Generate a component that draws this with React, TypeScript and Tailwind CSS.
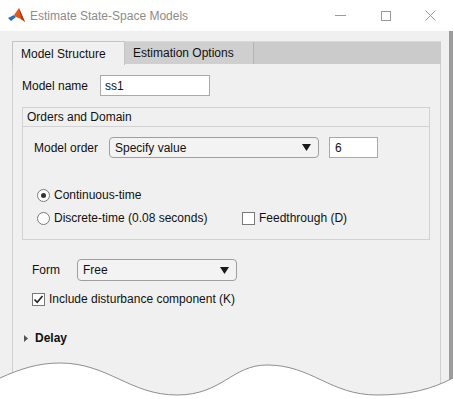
import React from "react";

const font = { fontFamily: '"Liberation Sans", Arial, sans-serif' };

function Caret() {
  return (
    <svg width="9" height="7" viewBox="0 0 9 7" className="block">
      <path d="M0 0 L9 0 L4.5 7 Z" fill="#1a1a1a" />
    </svg>
  );
}

function Radio({ checked }: { checked?: boolean }) {
  return (
    <span className="w-[13px] h-[13px] rounded-full border border-[#7a7a7a] bg-white flex items-center justify-center shrink-0">
      {checked && <span className="w-[5px] h-[5px] rounded-full bg-[#333]" />}
    </span>
  );
}

function Check({ checked }: { checked?: boolean }) {
  return (
    <span className="w-[13px] h-[13px] border border-[#7a7a7a] bg-white flex items-center justify-center shrink-0">
      {checked && (
        <svg width="11" height="11" viewBox="0 0 11 11">
          <path d="M1.5 5.5 L4.2 8.3 L9.5 2" fill="none" stroke="#222" strokeWidth="1.6" />
        </svg>
      )}
    </span>
  );
}

export default function App() {
  return (
    <div
      className="relative w-[453px] h-[399px] overflow-hidden bg-white text-[12px] text-[#111]"
      style={font}
    >
      {/* Title bar */}
      <div className="h-[31px] flex items-center bg-white">
        <svg width="18" height="18" viewBox="0 0 18 18" className="ml-[8px]">
          <path d="M0 11 L6 8 L8 10 L3 14 Z" fill="#2a6fb5" />
          <path d="M6 8 L11 1 L17 15 L13 12 L8 10 Z" fill="#e05a1c" />
          <path d="M11 1 L13 12 L17 15 Z" fill="#b53a10" />
        </svg>
        <span className="ml-[4px] text-[#8c8c8c] text-[12px]">Estimate State-Space Models</span>
        <div className="ml-auto flex items-center h-full">
          <div className="w-[45px] h-full flex items-center justify-center">
            <span className="block w-[11px] h-[1px] bg-[#9a9a9a]" />
          </div>
          <div className="w-[45px] h-full flex items-center justify-center">
            <span className="block w-[10px] h-[10px] border border-[#9a9a9a]" />
          </div>
          <div className="w-[45px] h-full flex items-center justify-center">
            <svg width="11" height="11" viewBox="0 0 11 11">
              <path d="M0.5 0.5 L10.5 10.5 M10.5 0.5 L0.5 10.5" stroke="#9a9a9a" strokeWidth="1" />
            </svg>
          </div>
        </div>
      </div>

      {/* Body */}
      <div className="flex h-[368px]">
        <div className="flex-1 bg-[#f0f0f0] pt-[10px] pl-[12px] pr-[8px]">
          {/* Tabs */}
          <div className="flex h-[23px] bg-[#cbcbcb] border-t border-[#d9d9d9]">
            <div className="w-[113px] h-[24px] bg-[#f0f0f0] border-l border-t border-r border-[#c4c4c4] flex items-center pl-[8px] -mt-[1px]">
              Model Structure
            </div>
            <div className="w-[129px] h-full bg-[#cfcfcf] border-r border-[#b4b4b4] flex items-center pl-[8px]">
              Estimation Options
            </div>
          </div>
          {/* Panel */}
          <div className="h-[400px] border-l border-r border-[#cfcfcf] pl-[9px] pr-[10px] pt-[11px]">
            <div className="flex items-center h-[21px]">
              <span className="w-[78px]">Model name</span>
              <div className="w-[110px] h-[21px] bg-white border border-[#a9a9a9] flex items-center pl-[4px]">ss1</div>
            </div>

            {/* Group */}
            <div className="mt-[11px] border border-[#d2d2d2]">
              <div className="h-[19px] border-b border-[#d2d2d2] flex items-center pl-[4px]">Orders and Domain</div>
              <div className="pl-[11px] pt-[10px] pb-[14px]">
                <div className="flex items-center h-[21px]">
                  <span className="w-[75px]">Model order</span>
                  <div className="w-[210px] h-[21px] bg-[#f3f3f3] border border-[#9f9f9f] rounded-[4px] flex items-center pl-[5px] pr-[7px]">
                    <span className="flex-1">Specify value</span>
                    <Caret />
                  </div>
                  <div className="ml-[10px] w-[49px] h-[21px] bg-white border border-[#a9a9a9] flex items-center pl-[5px]">6</div>
                </div>
                <div className="mt-[30px] flex items-center h-[14px] pl-[3px] gap-[4px]">
                  <Radio checked />
                  <span>Continuous-time</span>
                </div>
                <div className="mt-[9px] flex items-center h-[14px] pl-[3px]">
                  <div className="flex items-center gap-[4px] w-[205px]">
                    <Radio />
                    <span>Discrete-time (0.08 seconds)</span>
                  </div>
                  <div className="flex items-center gap-[4px]">
                    <Check />
                    <span>Feedthrough (D)</span>
                  </div>
                </div>
              </div>
            </div>

            <div className="mt-[19px] pl-[10px] flex items-center h-[22px]">
              <span className="w-[45px]">Form</span>
              <div className="w-[160px] h-[22px] bg-[#f3f3f3] border border-[#9f9f9f] rounded-[4px] flex items-center pl-[5px] pr-[7px]">
                <span className="flex-1">Free</span>
                <Caret />
              </div>
            </div>
            <div className="mt-[11px] pl-[10px] flex items-center h-[14px] gap-[4px]">
              <Check checked />
              <span>Include disturbance component (K)</span>
            </div>

            <div className="mt-[25px] flex items-center h-[14px] pl-[2px] gap-[7px]">
              <svg width="4" height="7" viewBox="0 0 4 7">
                <path d="M0 0 L4 3.5 L0 7 Z" fill="#555" />
              </svg>
              <span className="font-bold text-[12px]">Delay</span>
            </div>
          </div>
        </div>
        <div className="w-[4px] bg-[#9c9c9c]" />
      </div>

      {/* Torn edge */}
      <svg className="absolute left-0 top-0 pointer-events-none" width="453" height="399" viewBox="0 0 453 399">
        <path
          d="M0 378 C20 369 38 363 60 363 C108 363 130 395 177 395 C222 395 232 365 267 365 C312 365 330 395 377 395 C410 395 432 389 453 378 L453 399 L0 399 Z"
          fill="#ffffff"
        />
        <path
          d="M0 378 C20 369 38 363 60 363 C108 363 130 395 177 395 C222 395 232 365 267 365 C312 365 330 395 377 395 C410 395 432 389 453 378"
          fill="none"
          stroke="#8f8f8f"
          strokeWidth="1"
        />
      </svg>
    </div>
  );
}
